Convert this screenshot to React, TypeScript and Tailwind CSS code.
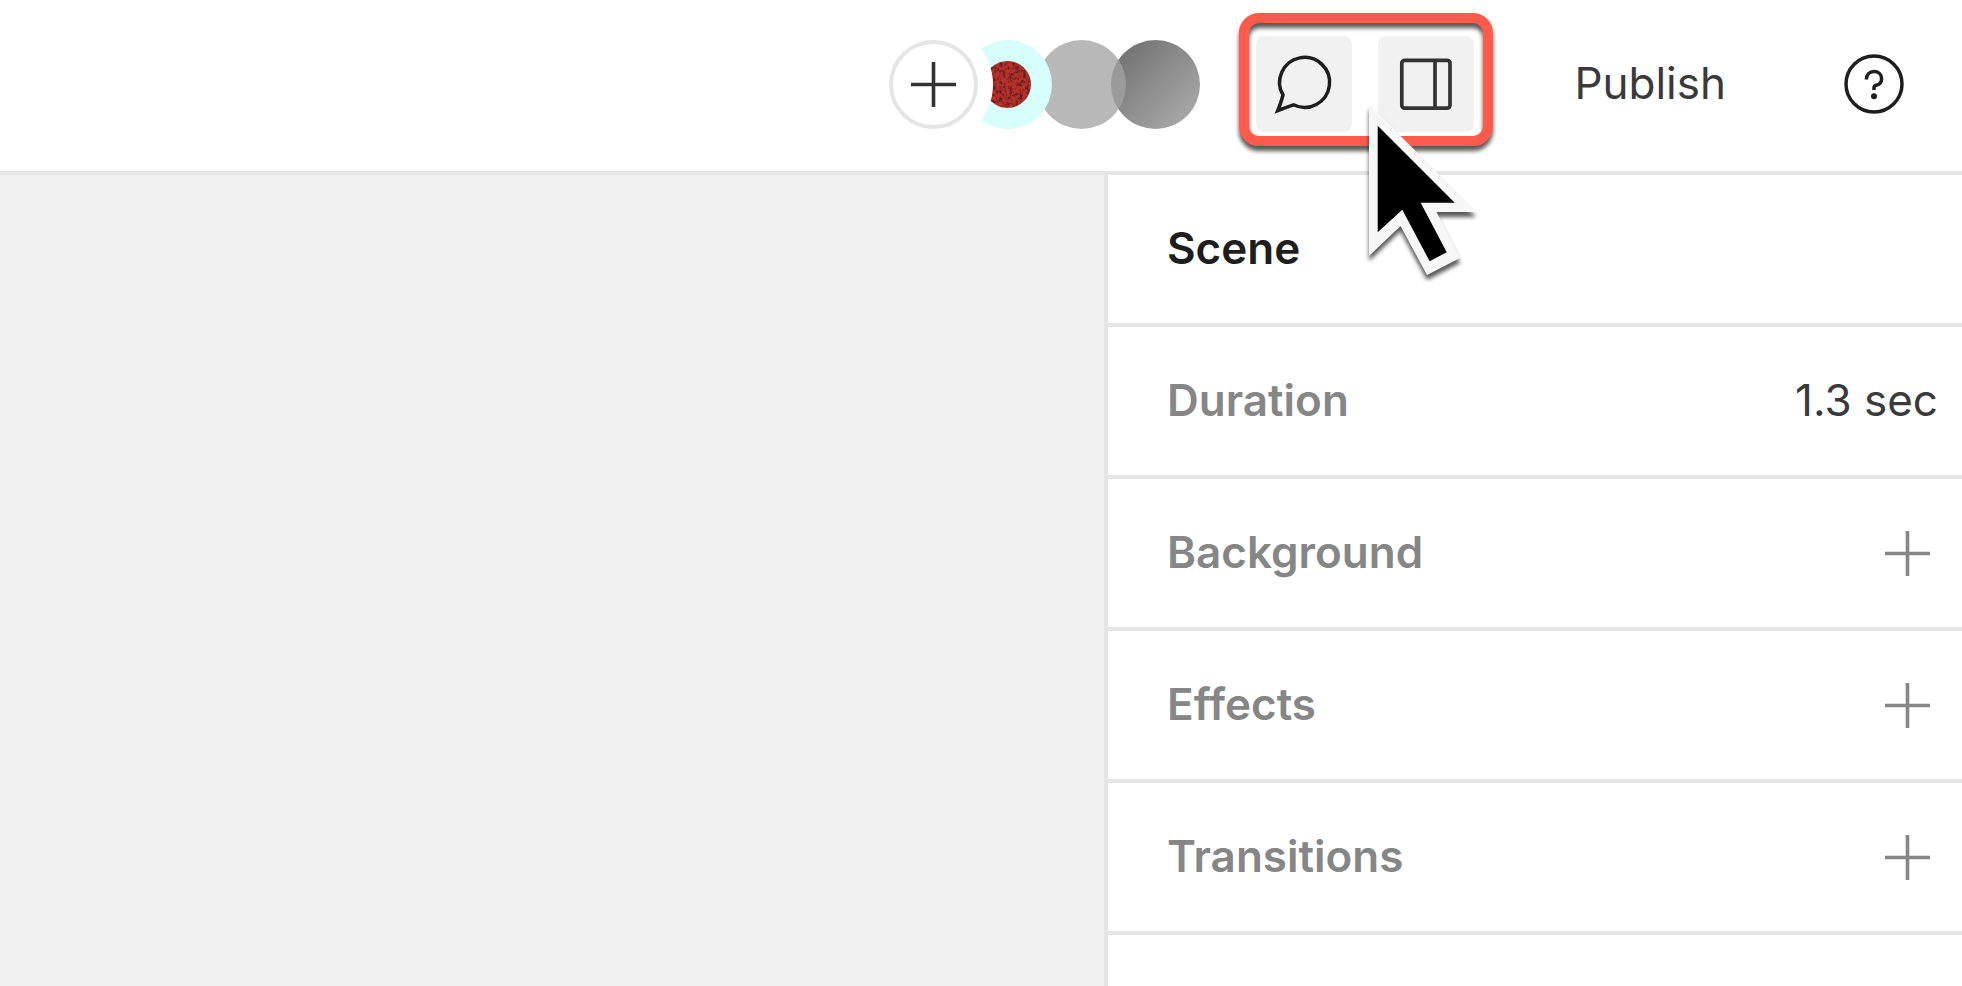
import type { ReactNode } from 'react';

function PlusIcon({ className }: { className: string }) {
  return (
    <svg viewBox="0 0 45 45" className={`size-[45px] ${className}`} fill="none" stroke="currentColor" strokeWidth="3.6">
      <path d="M22.5 0v45M0 22.5h45" />
    </svg>
  );
}

function ChatIcon() {
  return (
    <svg viewBox="0 0 96 96" className="size-24" fill="none" stroke="currentColor" strokeWidth="3.5">
      <path d="M27 59A25 25 0 1 1 37.5 68.8Q29.5 71.5 21.8 74.5Q25 67 27 59Z" />
    </svg>
  );
}

function PanelIcon() {
  return (
    <svg viewBox="0 0 96 96" className="size-24" fill="none" stroke="currentColor" strokeWidth="3.7">
      <rect x="23.8" y="24.3" width="48.2" height="47.9" rx="3" />
      <path d="M57 24v48" />
    </svg>
  );
}

function HelpIcon() {
  return (
    <svg viewBox="0 0 60 60" className="size-[60px]" fill="none" stroke="currentColor" strokeWidth="3.5">
      <circle cx="30" cy="30" r="28" />
      <path d="M22.4 25.5C22.4 20.5 25.6 17.6 30 17.6S37.6 20.4 37.6 24.7C37.6 28.8 34.8 30.6 32.4 31.2C30.8 31.6 30 32.3 30 33.8V36" />
      <circle cx="30" cy="42.3" r="3" fill="currentColor" stroke="none" />
    </svg>
  );
}

function PhotoAvatar() {
  return (
    <svg viewBox="0 0 89 89" className="relative z-10 -ml-[15px] size-[89px]" role="img" aria-label="Collaborator">
      <defs>
        <mask id="cut">
          <rect width="89" height="89" fill="white" />
          <circle cx="-29.5" cy="44.5" r="59.5" fill="black" />
        </mask>
        <filter id="grain" x="-10%" y="-10%" width="120%" height="120%" colorInterpolationFilters="sRGB">
          <feTurbulence type="fractalNoise" baseFrequency="0.3" numOctaves="3" seed="4" result="noise" />
          <feColorMatrix in="noise" values="0 0 0 0 0.2  0 0 0 0 0.1  0 0 0 0 0.1  2.2 0 0 0 -0.95" result="dark" />
          <feComposite in="dark" in2="SourceAlpha" operator="in" result="specks" />
          <feMerge result="disc">
            <feMergeNode in="SourceGraphic" />
            <feMergeNode in="specks" />
          </feMerge>
          <feGaussianBlur in="disc" stdDeviation="0.5" />
        </filter>
      </defs>
      <g mask="url(#cut)">
        <circle cx="44.5" cy="44.5" r="44.5" fill="#d6fefb" />
        <circle cx="44.5" cy="44.5" r="23.5" fill="#b9302b" filter="url(#grain)" />
      </g>
    </svg>
  );
}

function Cursor() {
  return (
    <svg
      viewBox="0 0 120 190"
      className="pointer-events-none absolute top-16 left-[108px] z-20 h-[190px] w-[120px] max-w-none overflow-visible drop-shadow-[0_5px_2px_rgba(0,0,0,0.65)]"
    >
      <path d="M5 4L112 112H72.500L96 158L63 175L36.500 126L5 156Z" fill="#f7f7f7" />
      <path d="M13.700 25.700L90.700 102.700H56.700L82.700 152.300L65.700 161.300L38.300 109.700L13.700 132.300Z" fill="#000" />
    </svg>
  );
}

function Row({ label, children }: { label: string; children?: ReactNode }) {
  return (
    <div className="flex h-[152px] items-center justify-between border-b-4 border-[#e5e5e5] pr-8 pl-[59px]">
      <h3 className="pb-0.5 font-semibold text-[#868686]">{label}</h3>
      {children}
    </div>
  );
}

const sections = ['Background', 'Effects', 'Transitions'];

export default function App() {
  return (
    <div className="flex min-h-screen flex-col bg-white font-[Inter,sans-serif] text-[44px] leading-[56px] text-[#3a3a3a]">
      <header className="flex items-center justify-end border-b-4 border-[#e5e5e5] pt-9 pr-[58px] pb-[39px]">
        <div className="flex items-center">
          <button
            aria-label="Add collaborator"
            className="flex size-[89px] items-center justify-center rounded-full border-4 border-[#e5e5e5]"
          >
            <PlusIcon className="text-[#333]" />
          </button>
          <PhotoAvatar />
          <div className="relative z-[5] -ml-[15px] size-[89px] rounded-full bg-[#a3a3a3]/77" />
          <div className="-ml-[15px] size-[89px] rounded-full bg-linear-to-br from-[#6c6c6c] to-[#b0b0b0]" />
        </div>

        <div className="relative ml-14 flex gap-[26px] text-[#1e1e1e]">
          <button aria-label="Comments" className="rounded-lg bg-[#f1f1f1]">
            <ChatIcon />
          </button>
          <button aria-label="Properties panel" className="rounded-lg bg-[#f1f1f1] text-[#333]">
            <PanelIcon />
          </button>
          <div className="pointer-events-none absolute -top-[23px] -right-[19px] -bottom-[14px] -left-[17px] rounded-[20px] border-10 border-[#ff5a4c] drop-shadow-[0_5px_2px_rgba(0,0,0,0.65)]" />
          <Cursor />
        </div>

        <button className="ml-[100px] pb-0.5">Publish</button>
        <button aria-label="Help" className="ml-[118px] text-[#1e1e1e]">
          <HelpIcon />
        </button>
      </header>

      <div className="flex flex-1">
        <main className="flex-1 bg-[#f1f1f1]" />
        <aside className="w-[858px] shrink-0 border-l-4 border-[#e5e5e5]">
          <div className="flex h-[152px] items-center border-b-4 border-[#e5e5e5] pl-[59px]">
            <h2 className="pb-0.5 font-semibold text-[#1e1e1e]">Scene</h2>
          </div>
          <Row label="Duration">
            <span className="-mr-2 pb-0.5">1.3 sec</span>
          </Row>
          {sections.map((label) => (
            <Row key={label} label={label}>
              <button aria-label={`Add ${label.toLowerCase()}`}>
                <PlusIcon className="text-[#868686]" />
              </button>
            </Row>
          ))}
        </aside>
      </div>
    </div>
  );
}
